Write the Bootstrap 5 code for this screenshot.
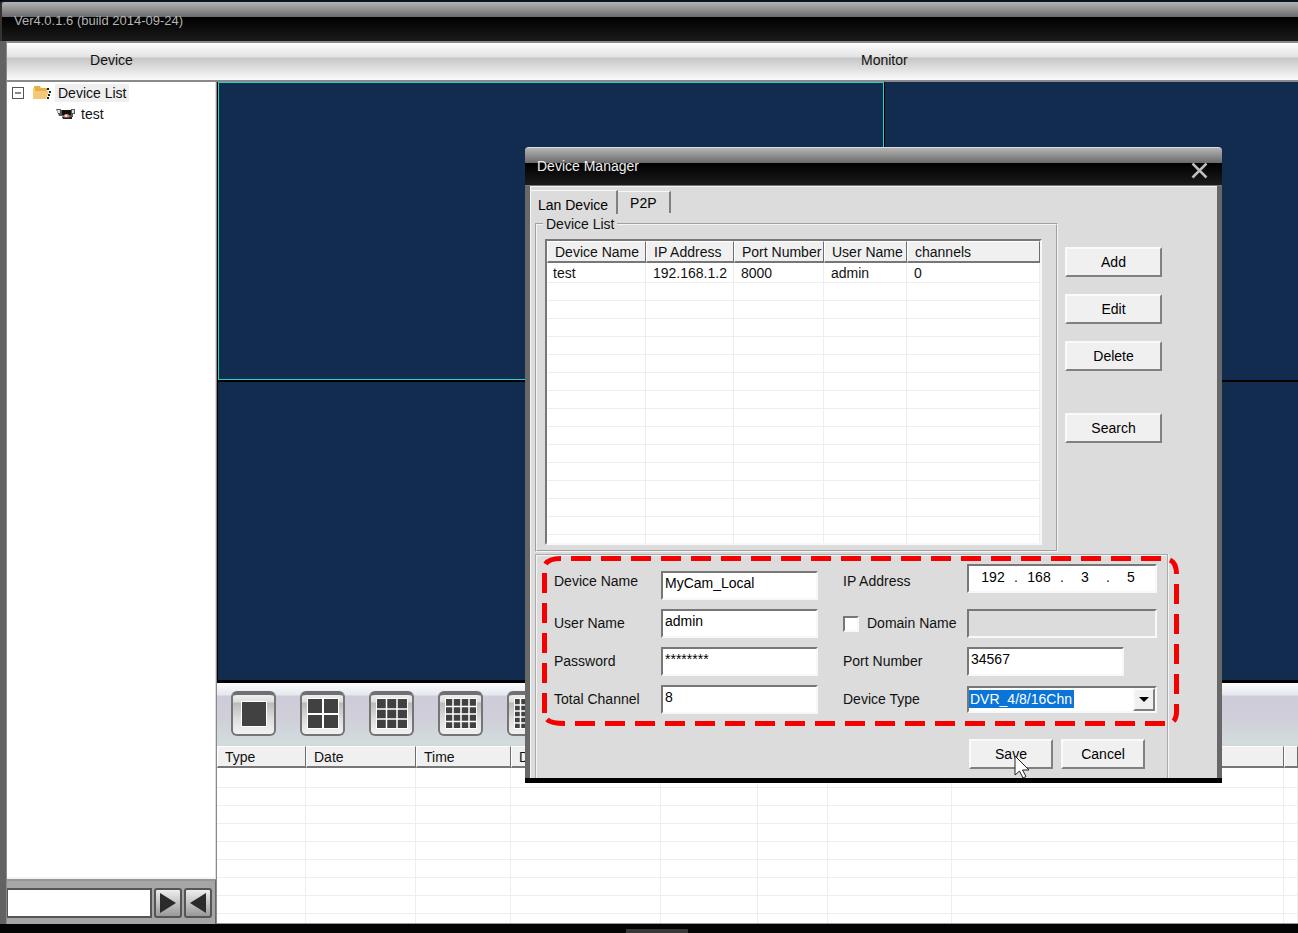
<!DOCTYPE html>
<html lang="en">
<head>
<meta charset="utf-8">
<meta name="viewport" content="width=device-width, initial-scale=1">
<title>Device Manager</title>
<link href="https://cdn.jsdelivr.net/npm/bootstrap@5.3.0/dist/css/bootstrap.min.css" rel="stylesheet">
<style>
  body { font-family: "Liberation Sans", Arial, sans-serif; font-size: 14px; line-height: 18px; color: #111; background: #000; }
  .glossy { background: linear-gradient(#b4b4b4 0, #6a6a6a 15px, #000 15px, #1b1b1b 100%); }
  .app-title { height: 41px; border-top: 2px solid #0b1222; border-left: 2px solid #333; padding-bottom: 2px; font-size: 13px; color: #b4b4b4; border-top-left-radius: 4px; }
  .app-frame { background: #8a8a8a; border-left: 6px solid #626262; padding: 2px 0 0 1px; min-height: 0; }
  .heading-strip { height: 37px; padding-bottom: 3px; background: linear-gradient(#fff 0, #e2e2e2 14px, #c6c6c6 15px, #fafafa 100%); }
  .side { width: 209px; flex: none; }
  .heading-monitor { padding-left: 645px; }
  .work { padding-top: 2px; }

  .tree { background: #fff; border-right: 1px solid #ddd; border-bottom: 2px solid #f4f4f4; padding: 0 0 0 5px; }
  .tree li { height: 21px; gap: 8px; }
  .tree .leaf { padding-left: 44px; gap: 5px; }
  .tree .picked { background: #efefef; padding: 0 3px; margin-left: -5px; }
  .finder { background: #a6a6a6; height: 45px; padding: 7px 3px 0 0; gap: 2px; border-top: 2px solid #969696; border-right: 1px solid #666; }
  .finder input { height: 30px; min-width: 0; border: 2px solid #555; border-left-width: 1px; background: #fff; }
  .finder button { width: 28px; height: 30px; flex: none; border: 2px solid #555; border-radius: 3px; background: linear-gradient(#eee, #bbb 60%, #999); padding: 0; }

  .stage { margin-left: 1px; min-width: 0; }
  .panes { background: #000; display: grid; grid-template: 1fr 1fr / 666px 1fr; gap: 2px 1px; padding: 0 0 3px 1px; }
  .panes div { background: #122c50; }
  .panes .active-pane { border: 1px solid #2fd0c4; }
  .toolbar { height: 63px; padding-left: 14px; padding-top: 8px; gap: 24px; background: linear-gradient(#fbfcff 0, #e4e8ee 12px, #cdccd8 13px, #cfced9 34px, #d3dcdc 60px, #d0d8d9 100%); }
  .toolbar button { width: 45px; height: 45px; flex: none; padding: 0; border: 2px solid #757575; border-top: 4px solid #707070; border-radius: 6px; background: linear-gradient(#eee 0, #ddd 7px, #bbb 8px, #ddd 60%, #f2f2f2); display: flex; justify-content: center; }

  .grid-table { table-layout: fixed; border-collapse: separate; border-spacing: 0; background: #fff; }
  .grid-table th { height: 22px; padding: 2px 0 0 7px; font-weight: 400; background: #f0f0f0; border: solid; border-width: 1px 1px 2px 1px; border-color: #fff #6d6d6d #777 #fff; white-space: nowrap; overflow: hidden; line-height: 17px; }
  .grid-table td { height: 18px; padding: 1px 0 0 7px; border-right: 1px solid #eee; border-bottom: 1px solid #eee; line-height: 16px; }
  .grid-table td:first-child { padding-left: 6px; }
  .grid-table tr.first td { height: 20px; }
  .log { height: 178px; background: #fff; border-bottom: 1px solid #999; }
  .app-foot { height: 9px; background: #040404; padding-left: 16px; }
  .app-foot span { width: 62px; height: 4px; background: #383838; }

  .dialog { position: absolute; left: 525px; top: 147px; width: 697px; }
  .dialog-title { height: 39px; padding: 0 14px 2px 12px; border-radius: 4px 4px 0 0; border-bottom: 1px solid #777; border-top: 1px solid #ddd; color: #eee; }
  .dialog-title button { border: 0; background: none; padding: 10px 0 0; line-height: 0; }
  .dialog-body { background: #dcdcdc; border: solid #686868; border-width: 0 5px; padding: 4px 0 0; box-shadow: inset 1px 1px #f5f5f5; }
  .dialog-base { height: 5px; background: #000; }
  .tabs button { border: 0; border-top: 1px solid #f8f8f8; border-right: 2px solid #808080; background: none; padding: 0 8px; height: 22px; }
  .tabs .on { height: 24px; padding-top: 4px; }
  .panel-row { padding-left: 5px; gap: 7px; margin-top: 1px; }
  .group { width: 523px; border: 2px groove #f4f4f4; padding: 6px 14px 5px 8px; }
  .group legend { float: none; width: auto; font-size: 14px; line-height: 18px; margin: 0 0 0 -2px; padding: 0 3px; }
  .sunken { border: 2px solid; border-color: #777 #f8f8f8 #f8f8f8 #777; background: #fff; }
  .listing { height: 306px; }
  .raised { height: 30px; border: 2px solid; border-color: #fafafa #808080 #808080 #fafafa; background: #f0f0f0; padding: 0 0 1px; }
  .side-actions { width: 97px; padding-top: 32px; gap: 17px; }
  .side-actions .apart { margin-top: 25px; }

  .editor { width: 633px; margin: 2px 0 0 5px; border: solid #aaa; border-width: 1px 1px 0; box-shadow: inset 1px 1px #f4f4f4, 1px 0 #f4f4f4; padding: 9px 22px 9px 18px; }
  .fields { display: grid; grid-template-columns: 107px 182px 124px 190px; grid-template-rows: 36px 29px 29px 29px; row-gap: 9px; align-items: center; }
  .fields label { padding-bottom: 2px; }
  .fields input.sunken { width: 157px; height: 29px; padding: 0 2px 5px; }
  .fields input.wide { width: 190px; background: #dcdcdc; }
  .ip { height: 29px; padding: 0 2px 4px 3px; }
  .fields .ip input { width: 42px; border: 0; padding: 0; text-align: center; background: none; }
  .ip span { width: 4px; }
  .fields input.tick { appearance: none; width: 16px; height: 16px; padding: 0; flex: none; }
  .combo select { appearance: none; width: 190px; height: 27px; padding: 0 1px 2px; border-radius: 0; color: #fff; background: linear-gradient(#0a74d8, #0a74d8) 0 2px / 105px 18px no-repeat #fff; }
  .combo span { right: 2px; top: 2px; width: 22px; height: 23px; }
  .actions { gap: 8px; margin-top: 25px; }
  .actions button { width: 84px; }
  .marking { left: 15px; top: 407px; }
  .pointer { left: 45px; top: 16px; }
</style>
</head>
<body class="vh-100 d-flex flex-column overflow-hidden position-relative">

<header class="app-title glossy flex-shrink-0 ps-2 d-flex align-items-center"><span class="ms-1">Ver4.0.1.6 (build 2014-09-24)</span></header>

<main class="app-frame flex-grow-1 d-flex flex-column">
  <div class="heading-strip d-flex align-items-center flex-shrink-0">
    <div class="side text-center">Device</div>
    <div class="heading-monitor">Monitor</div>
  </div>
  <div class="work d-flex flex-grow-1">
    <aside class="side d-flex flex-column">
      <ul class="tree list-unstyled mb-0 flex-grow-1">
        <li class="d-flex align-items-center">
          <svg width="12" height="12"><rect x=".5" y=".5" width="11" height="11" fill="#fff" stroke="#555"/><path d="M3 6h6" stroke="#111"/></svg>
          <svg width="20" height="16" viewBox="0 0 20 16"><path d="M2 1h6l1 2h6v3H2z" fill="#e8b04a"/><path d="M1 14V3h2v3h13l-2 8z" fill="#f6cf77"/><path d="M1 14 4 6h13l-3 8z" fill="#f5c878"/><path d="M15 3h2v2h-2zM17 6h2v2h-2zM16 9h2v2h-2zM15 12h2v2h-2z" fill="#222"/></svg>
          <span class="picked">Device List</span>
        </li>
        <li class="leaf d-flex align-items-center">
          <svg width="20" height="14" viewBox="0 0 20 14"><path d="M0 2h5v1h10V2h4v5h-2v3h-3l-1 1H8L6 9H3z" fill="#555"/><path d="M1 3h3v3H2zM16 3h2v3h-2z" fill="#ddd"/><path d="M6 3h9v5H6z" fill="#111"/><path d="M7 10l2-3h3l2 3z" fill="#e08070"/><path d="M9 8h2v2H9z" fill="#fdd"/><path d="M6 10h2v1h5v-1h3v2H7z" fill="#222"/></svg>
          <span>test</span>
        </li>
      </ul>
      <div class="finder d-flex">
        <input type="text" class="flex-grow-1" aria-label="Find">
        <button type="button" aria-label="Next"><svg width="18" height="22"><path d="M1 1v20l16-10z" fill="#2b2b2b"/></svg></button>
        <button type="button" aria-label="Previous"><svg width="18" height="22"><path d="M17 1v20L1 11z" fill="#2b2b2b"/></svg></button>
      </div>
    </aside>

    <section class="stage flex-grow-1 d-flex flex-column">
      <div class="panes flex-grow-1"><div class="active-pane"></div><div></div><div></div><div></div></div>
      <div class="toolbar d-flex overflow-hidden">
        <button type="button" aria-label="1 view"><svg width="32" height="34"><path d="M3 6h26v26H3z" fill="#fff"/><path d="M4 7h24v24H4z" fill="#414141"/></svg></button>
        <button type="button" aria-label="4 views"><svg width="32" height="34"><path d="M0 3h32v31H0z" fill="#fff"/><path d="M1 4h14v14H1zM17 4h14v14H17zM1 20h14v13H1zM17 20h14v13H17z" fill="#414141"/></svg></button>
        <button type="button" aria-label="9 views"><svg width="32" height="34"><path d="M0 3h32v31H0z" fill="#fff"/><path d="M1 4h30v29H1z" fill="#414141"/><path d="M10.500 3v31M21 3v31M0 14h32M0 24h32" stroke="#fff" stroke-width="1.500"/></svg></button>
        <button type="button" aria-label="16 views"><svg width="32" height="34"><path d="M0 3h32v31H0z" fill="#fff"/><path d="M1 4h30v29H1z" fill="#414141"/><path d="M8 3v31M16 3v31M24 3v31M0 11.500h32M0 19h32M0 26.500h32" stroke="#fff" stroke-width="1.500"/></svg></button>
        <button type="button" aria-label="25 views"><svg width="32" height="34"><path d="M0 3h32v31H0z" fill="#fff"/><path d="M1 4h30v29H1z" fill="#414141"/><path d="M6.500 3v31M12.500 3v31M19 3v31M25 3v31M0 10h32M0 16h32M0 22h32M0 28h32" stroke="#fff" stroke-width="1.500"/></svg></button>
      </div>
      <div class="log overflow-hidden">
        <table class="grid-table w-100">
          <colgroup><col style="width:89px"><col style="width:110px"><col style="width:95px"><col style="width:150px"><col style="width:97px"><col style="width:70px"><col style="width:124px"><col style="width:332px"><col></colgroup>
          <thead><tr><th>Type</th><th>Date</th><th>Time</th><th>D</th><th></th><th></th><th></th><th></th><th></th></tr></thead>
          <tbody id="logRows"></tbody>
        </table>
      </div>
    </section>
  </div>
</main>
<footer class="app-foot flex-shrink-0 d-flex justify-content-center align-items-end"><span></span></footer>

<div class="dialog" role="dialog" aria-labelledby="dlgTitle">
  <div class="dialog-title glossy d-flex justify-content-between align-items-center">
    <span id="dlgTitle">Device Manager</span>
    <button type="button" aria-label="Close"><svg width="17" height="17"><path d="M1.500 1.500l14 14M15.500 1.500l-14 14" stroke="#bdbdbd" stroke-width="2.500"/></svg></button>
  </div>
  <div class="dialog-body">
    <div class="tabs d-flex align-items-center" role="tablist">
      <button type="button" role="tab" class="on" aria-selected="true">Lan Device</button>
      <button type="button" role="tab" class="px-2" aria-selected="false"><span class="mx-1">P2P</span></button>
    </div>
    <div class="panel-row d-flex">
      <fieldset class="group">
        <legend>Device List</legend>
        <div class="listing sunken overflow-hidden">
          <table class="grid-table w-100">
            <colgroup><col style="width:99px"><col style="width:88px"><col style="width:90px"><col style="width:83px"><col></colgroup>
            <thead><tr><th>Device Name</th><th>IP Address</th><th>Port Number</th><th>User Name</th><th>channels</th></tr></thead>
            <tbody id="deviceRows"><tr class="first"><td>test</td><td>192.168.1.2</td><td>8000</td><td>admin</td><td>0</td></tr></tbody>
          </table>
        </div>
      </fieldset>
      <div class="side-actions d-flex flex-column">
        <button type="button" class="raised">Add</button>
        <button type="button" class="raised">Edit</button>
        <button type="button" class="raised">Delete</button>
        <button type="button" class="raised apart">Search</button>
      </div>
    </div>
    <form class="editor">
      <div class="fields">
        <label for="devName">Device Name</label><input class="sunken align-self-end" id="devName" type="text" value="MyCam_Local">
        <label for="ip1">IP Address</label>
        <div class="ip sunken d-flex align-items-center align-self-start">
          <input id="ip1" type="text" value="192"><span>.</span><input type="text" aria-label="Second octet" value="168"><span>.</span><input type="text" aria-label="Third octet" value="3"><span>.</span><input type="text" aria-label="Fourth octet" value="5">
        </div>
        <label for="user">User Name</label><input class="sunken" id="user" type="text" value="admin">
        <div class="d-flex align-items-center"><input class="tick sunken" type="checkbox" id="useDomain"><label class="ms-2" for="useDomain">Domain Name</label></div>
        <input class="sunken wide" type="text" aria-label="Domain Name" disabled>
        <label for="pass">Password</label><input class="sunken" id="pass" type="text" value="********">
        <label for="port">Port Number</label><input class="sunken" id="port" type="text" value="34567">
        <label for="chan">Total Channel</label><input class="sunken" id="chan" type="text" value="8">
        <label for="devType">Device Type</label>
        <div class="combo position-relative">
          <select id="devType" class="sunken"><option>DVR_4/8/16Chn</option></select>
          <span class="raised position-absolute d-flex align-items-center justify-content-center pe-none"><svg width="10" height="5"><path d="M0 0h10L5 5z" fill="#000"/></svg></span>
        </div>
      </div>
      <div class="actions d-flex justify-content-end">
        <div class="position-relative">
          <button type="button" class="raised">Save</button>
          <svg class="pointer position-absolute pe-none" width="17" height="24" viewBox="0 0 17 24"><path d="M1 1v19l4.500-4 3.500 7 3-1.500-3.500-6.500H15z" fill="#fff" stroke="#222"/></svg>
        </div>
        <button type="button" class="raised">Cancel</button>
      </div>
    </form>
  </div>
  <div class="dialog-base"></div>
  <!-- dashed callout round the editable fields -->
  <svg class="marking position-absolute pe-none" width="644" height="176" viewBox="540 554 644 176" fill="none" stroke="#f40000" stroke-width="5">
    <path d="M571 558.500H1162M575 723.500H1166M544.500 573V714M1176.500 584V704" stroke-dasharray="20 10"/>
    <path d="M545.500 564Q549 558.500 561 558.500M1170 560Q1176.500 563 1176.500 574M547 719.500Q551 723.500 565 723.500M1176.500 704V712Q1176.500 718 1173.500 721"/>
  </svg>
</div>

<script src="https://cdn.jsdelivr.net/npm/bootstrap@5.3.0/dist/js/bootstrap.bundle.min.js"></script>
<script>
  // blank ruled rows under the list headings
  function rule(id, rows, cols, tallFirst) {
    let html = '';
    for (let r = 0; r < rows; r++) html += '<tr' + (tallFirst && r === 0 ? ' class="first"' : '') + '>' + '<td></td>'.repeat(cols) + '</tr>';
    document.getElementById(id).insertAdjacentHTML('beforeend', html);
  }
  rule('logRows', 9, 9, true);
  rule('deviceRows', 15, 5, false);
</script>
</body>
</html>
